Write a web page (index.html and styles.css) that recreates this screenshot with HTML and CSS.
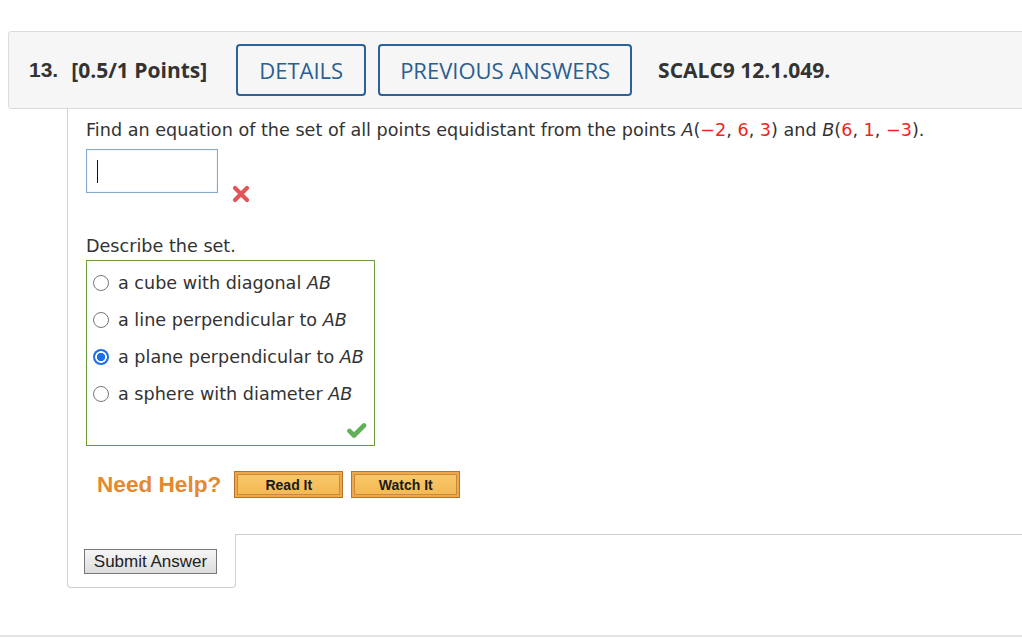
FILE: index.html
```html
<!DOCTYPE html>
<html>
<head>
<meta charset="utf-8">
<link rel="stylesheet" href="styles.css">
</head>
<body>
<div class="page">
  <div class="qhead">
    <span class="qnum">13.</span>
    <span class="qpts">[0.5/1 Points]</span>
    <span class="hbtn">DETAILS</span>
    <span class="hbtn">PREVIOUS ANSWERS</span>
    <span class="qref">SCALC9 12.1.049.</span>
  </div>
  <div class="qbody">
    <p class="qtext">Find an equation of the set of all points equidistant from the points <i>A</i>(<span class="red">&minus;2</span>, <span class="red">6</span>, <span class="red">3</span>) and <i>B</i>(<span class="red">6</span>, <span class="red">1</span>, <span class="red">&minus;3</span>).</p>
    <div class="ansrow">
      <div class="inbox"><span class="caret"></span></div>
      <svg class="xmark" width="18" height="18" viewBox="0 0 18 18"><path d="M3 3 L15 15 M15 3 L3 15" stroke="#e25555" stroke-width="4.2" stroke-linecap="round"/></svg>
    </div>
    <p class="desc">Describe the set.</p>
    <div class="choices">
      <div class="opt"><span class="radio"></span><span>a cube with diagonal <i>AB</i></span></div>
      <div class="opt"><span class="radio"></span><span>a line perpendicular to <i>AB</i></span></div>
      <div class="opt"><span class="radio on"></span><span>a plane perpendicular to <i>AB</i></span></div>
      <div class="opt"><span class="radio"></span><span>a sphere with diameter <i>AB</i></span></div>
      <div class="checkrow"><svg width="21" height="18" viewBox="0 0 21 18"><path d="M3.5 10 L8 14.5 L18 4.5" fill="none" stroke="#62b05a" stroke-width="4.6" stroke-linecap="round" stroke-linejoin="round"/></svg></div>
    </div>
    <div class="help">
      <span class="needhelp">Need Help?</span>
      <span class="hbutton"><span>Read It</span></span>
      <span class="hbutton"><span>Watch It</span></span>
    </div>
  </div>
  <div class="qfoot">
    <div class="tab"><span class="submit">Submit Answer</span></div>
    <div class="rest"></div>
  </div>
  <div class="nextline"></div>
</div>
</body>
</html>
```
FILE: styles.css
```css
html, body { margin: 0; padding: 0; overflow: hidden; background: #fff; }
body { width: 1022px; height: 638px; }
.page { padding: 31px 0 0 8px; }

.qhead {
  display: flex;
  align-items: center;
  height: 76px;
  margin-right: -20px;
  background: #f6f6f6;
  border: 1px solid #dcdcdc;
  border-radius: 3px;
  padding-left: 20px;
  color: #333;
}
.qnum { font-family: "Liberation Sans", Arial, sans-serif; font-weight: bold; font-size: 21px; }
.qpts { font-family: "Open Sans", sans-serif; font-weight: 700; font-size: 21px; margin-left: 13px; margin-right: 29px; }
.hbtn {
  font-family: "Open Sans", sans-serif;
  font-size: 22px;
  color: #2b5e91;
  border: 2px solid #2c6297;
  border-radius: 4px;
  height: 48px;
  line-height: 48px;
  padding: 0 21px;
  margin-right: 12px;
}
.hbtn + .hbtn { padding: 0 20px; }
.qref { font-family: "Open Sans", sans-serif; font-weight: 700; font-size: 21px; margin-left: 14px; }

.qbody {
  margin-left: 59px;
  border-left: 1px solid #cfcfcf;
  padding: 11px 0 36px 18px;
  font-family: "DejaVu Sans", Verdana, sans-serif;
  font-size: 17.6px;
  color: #333;
}
.qtext { margin: 0; line-height: 20px; }
.red { color: #e8281e; }
.ansrow { display: flex; align-items: flex-end; margin-top: 9px; }
.inbox {
  width: 130px; height: 42px;
  border: 1px solid #86a8cc;
  box-shadow: inset 0 0 2px #cfdff0;
  position: relative;
  background: #fff;
}
.caret { position: absolute; left: 10px; top: 10px; width: 1px; height: 23px; background: #111; }
.xmark { margin-left: 14px; margin-bottom: -10px; }
.desc { margin: 43px 0 4px; line-height: 20px; }
.choices {
  width: 287px;
  border: 1px solid #6b9b3b;
  padding: 3px 0 6px;
}
.opt { display: flex; align-items: center; height: 37px; }
.radio {
  width: 14px; height: 14px;
  border: 1px solid #777;
  border-radius: 50%;
  background: #fff;
  margin: 0 9px 0 6px;
}
.radio.on {
  width: 16px; height: 16px;
  border: none;
  background: radial-gradient(circle, #1b6fe8 0 3.8px, #fff 4.5px 5.5px, #1b6fe8 6.2px);
}
.checkrow { display: flex; justify-content: flex-end; margin-top: 9px; height: 18px; padding-right: 7px; }
.help { display: flex; align-items: center; margin-top: 25px; padding-left: 11px; }
.needhelp {
  font-family: "Liberation Sans", Arial, sans-serif;
  font-weight: bold;
  font-size: 22.6px;
  color: #e4892f;
  margin-right: 13px;
}
.hbutton {
  display: inline-block;
  border: 1px solid #b5732e;
  background: #f0a94a;
  margin-right: 8px;
  padding: 2px;
  box-sizing: border-box;
  width: 109px; height: 27px;
}
.hbutton span {
  display: block;
  height: 100%;
  background: linear-gradient(#f8c76a, #f4b953);
  border: 1px solid #c98a3c;
  box-sizing: border-box;
  text-align: center;
  font-family: "Liberation Sans", Arial, sans-serif;
  font-weight: bold;
  font-size: 14px;
  line-height: 20px;
  color: #1a1a1a;
}

.qfoot { display: flex; margin-left: 59px; height: 54px; }
.tab {
  width: 169px;
  border: 1px solid #cfcfcf;
  border-top: none;
  border-radius: 0 0 4px 4px;
  padding: 15px 0 0 16px;
  box-sizing: border-box;
}
.submit {
  display: inline-block;
  width: 133px; height: 25px;
  box-sizing: border-box;
  border: 1px solid #777;
  background: linear-gradient(#f6f6f6, #dcdcdc);
  font-family: "Liberation Sans", Arial, sans-serif;
  font-size: 17px;
  line-height: 23px;
  text-align: center;
  color: #222;
}
.rest { flex: 1; border-top: 1px solid #cfcfcf; }
.nextline { margin: 47px -20px 0 -8px; border-top: 2px solid #e4e4e4; }
```
